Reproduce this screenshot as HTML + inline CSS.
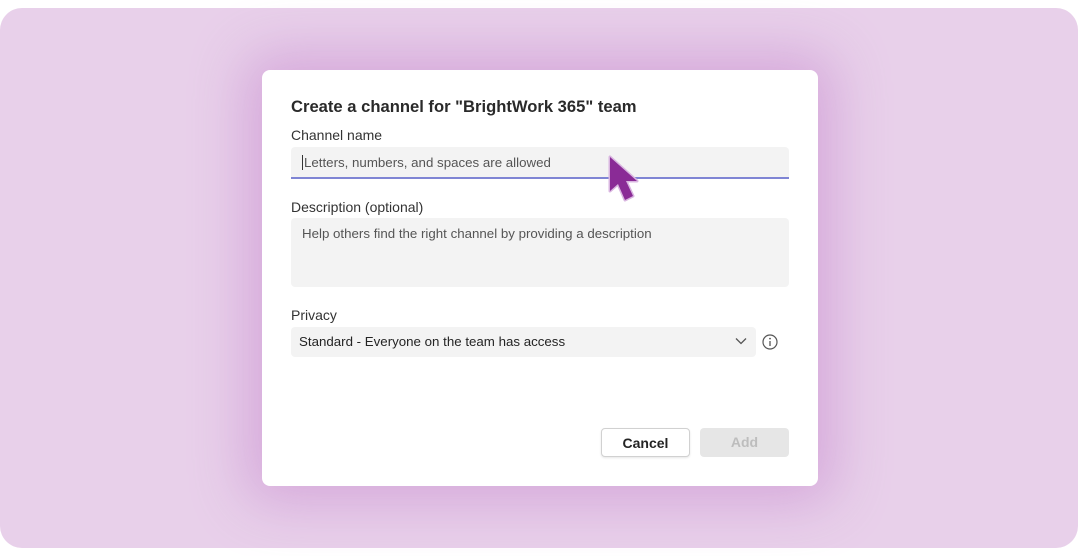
<!DOCTYPE html>
<html><head><style>
body{margin:0;width:1080px;height:556px;background:#fff;position:relative;overflow:hidden;font-family:"Liberation Sans",Arial,sans-serif;}
.bg{position:absolute;left:0;top:8px;width:1078px;height:540px;background:#e8d0ea;border-radius:22px;overflow:hidden;}
.dlg{position:absolute;left:262px;top:70px;width:556px;height:416px;background:#fff;border-radius:8px;box-shadow:0 0 55px 16px rgba(190,120,200,0.45);}
.t{position:absolute;left:29px;top:27px;font-size:16.6px;font-weight:bold;color:#2a2a2a;}
.l{position:absolute;left:29px;font-size:14px;color:#333;}
.in{position:absolute;left:29px;width:498px;background:#f3f3f3;border-radius:4px;font-size:13.3px;color:#555;box-sizing:border-box;}
.btn{position:absolute;top:358px;height:29px;border-radius:4px;font-size:14px;font-weight:bold;text-align:center;line-height:29px;box-sizing:border-box;}
</style></head><body>
<div class="bg"></div>
<div class="dlg">
<div class="t">Create a channel for "BrightWork 365" team</div>
<div class="l" style="top:57px">Channel name</div>
<div class="in" style="top:77px;height:32px;padding:8px 11px;border-bottom:2px solid #7f85d4;border-radius:4px 4px 0 0"><span style="border-left:1px solid #333;margin-right:1px"></span>Letters, numbers, and spaces are allowed</div>
<div class="l" style="top:129px">Description (optional)</div>
<div class="in" style="top:148px;height:69px;padding:8px 11px">Help others find the right channel by providing a description</div>
<div class="l" style="top:237px">Privacy</div>
<div class="in" style="top:257px;width:465px;height:30px;padding:7px 8px;color:#242424">Standard - Everyone on the team has access
<svg style="position:absolute;right:9px;top:10px" width="12" height="8" viewBox="0 0 12 8"><path d="M1 1.5l5 5 5-5" fill="none" stroke="#555" stroke-width="1.3"/></svg></div>
<svg style="position:absolute;left:500px;top:264px" width="16" height="16" viewBox="0 0 16 16"><circle cx="8" cy="8" r="7" fill="none" stroke="#555" stroke-width="1.2"/><path d="M8 7v5" stroke="#555" stroke-width="1.3"/><circle cx="8" cy="4.6" r=".9" fill="#555"/></svg>
<div class="btn" style="left:339px;width:89px;border:1px solid #d1d1d1;color:#242424;background:#fff;box-shadow:0 1px 2px rgba(0,0,0,.1)">Cancel</div>
<div class="btn" style="left:438px;width:89px;background:#e6e6e6;color:#bdbdbd">Add</div>
</div>
<svg style="position:absolute;left:603px;top:150px" width="44" height="56" viewBox="0 0 44 56"><path d="M7 7L7 41L15 34L22 50L30 46L23 31L34 31Z" fill="#fff" stroke="#d9b6e0" stroke-width="3" stroke-linejoin="round"/><path d="M7 7L7 41L15 34L22 50L30 46L23 31L34 31Z" fill="#8a2b96"/></svg>
</body></html>
